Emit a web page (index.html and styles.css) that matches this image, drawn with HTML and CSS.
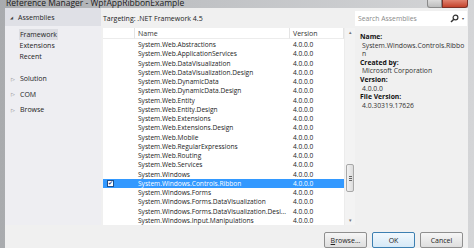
FILE: index.html
```html
<!DOCTYPE html>
<html lang="en">
<head>
    <meta charset="UTF-8">
    <title>Reference Manager - WpfAppRibbonExample</title>
    <link rel="stylesheet" href="styles.css">
</head>
<body>
<div class="window">
    <div class="titlebar">
        <span class="title">Reference Manager - WpfAppRibbonExample</span>
        <span class="btn-min"></span>
        <span class="btn-close"></span>
    </div>
    <div class="client">
        <div class="main">
            <!-- left navigation -->
            <div class="nav">
                <div class="nav-head"><span class="arrow-open">&#9698;</span>Assemblies</div>
                <div class="nav-sub selected">Framework</div>
                <div class="nav-sub">Extensions</div>
                <div class="nav-sub">Recent</div>
                <div class="nav-group"><span class="arrow-closed">&#9655;</span>Solution</div>
                <div class="nav-group"><span class="arrow-closed">&#9655;</span>COM</div>
                <div class="nav-group"><span class="arrow-closed">&#9655;</span>Browse</div>
            </div>

            <!-- assembly list -->
            <div class="center">
                <div class="targeting">Targeting: .NET Framework 4.5</div>
                <div class="listbox">
                    <div class="list">
                        <div class="row header">
                            <div class="c-check"></div>
                            <div class="c-name">Name</div>
                            <div class="c-ver">Version</div>
                        </div>
                        <div class="row"><div class="c-check"></div><div class="c-name">System.Web.Abstractions</div><div class="c-ver">4.0.0.0</div></div>
                        <div class="row"><div class="c-check"></div><div class="c-name">System.Web.ApplicationServices</div><div class="c-ver">4.0.0.0</div></div>
                        <div class="row"><div class="c-check"></div><div class="c-name">System.Web.DataVisualization</div><div class="c-ver">4.0.0.0</div></div>
                        <div class="row"><div class="c-check"></div><div class="c-name">System.Web.DataVisualization.Design</div><div class="c-ver">4.0.0.0</div></div>
                        <div class="row"><div class="c-check"></div><div class="c-name">System.Web.DynamicData</div><div class="c-ver">4.0.0.0</div></div>
                        <div class="row"><div class="c-check"></div><div class="c-name">System.Web.DynamicData.Design</div><div class="c-ver">4.0.0.0</div></div>
                        <div class="row"><div class="c-check"></div><div class="c-name">System.Web.Entity</div><div class="c-ver">4.0.0.0</div></div>
                        <div class="row"><div class="c-check"></div><div class="c-name">System.Web.Entity.Design</div><div class="c-ver">4.0.0.0</div></div>
                        <div class="row"><div class="c-check"></div><div class="c-name">System.Web.Extensions</div><div class="c-ver">4.0.0.0</div></div>
                        <div class="row"><div class="c-check"></div><div class="c-name">System.Web.Extensions.Design</div><div class="c-ver">4.0.0.0</div></div>
                        <div class="row"><div class="c-check"></div><div class="c-name">System.Web.Mobile</div><div class="c-ver">4.0.0.0</div></div>
                        <div class="row"><div class="c-check"></div><div class="c-name">System.Web.RegularExpressions</div><div class="c-ver">4.0.0.0</div></div>
                        <div class="row"><div class="c-check"></div><div class="c-name">System.Web.Routing</div><div class="c-ver">4.0.0.0</div></div>
                        <div class="row"><div class="c-check"></div><div class="c-name">System.Web.Services</div><div class="c-ver">4.0.0.0</div></div>
                        <div class="row"><div class="c-check"></div><div class="c-name">System.Windows</div><div class="c-ver">4.0.0.0</div></div>
                        <div class="row active">
                            <div class="c-check"><span class="checkbox">&#10004;</span></div>
                            <div class="c-name">System.Windows.Controls.Ribbon</div>
                            <div class="c-ver">4.0.0.0</div>
                        </div>
                        <div class="row"><div class="c-check"></div><div class="c-name">System.Windows.Forms</div><div class="c-ver">4.0.0.0</div></div>
                        <div class="row"><div class="c-check"></div><div class="c-name">System.Windows.Forms.DataVisualization</div><div class="c-ver">4.0.0.0</div></div>
                        <div class="row"><div class="c-check"></div><div class="c-name">System.Windows.Forms.DataVisualization.Desi...</div><div class="c-ver">4.0.0.0</div></div>
                        <div class="row"><div class="c-check"></div><div class="c-name">System.Windows.Input.Manipulations</div><div class="c-ver">4.0.0.0</div></div>
                    </div>
                    <div class="scrollbar">
                        <span class="sb-arrow">&#9652;</span>
                        <div class="sb-track"><div class="sb-thumb"><span></span><span></span><span></span></div></div>
                        <span class="sb-arrow">&#9662;</span>
                    </div>
                </div>
            </div>

            <!-- details -->
            <div class="details">
                <div class="search">
                    <span class="search-text">Search Assemblies</span>
                    <svg class="search-icon" width="9" height="9" viewBox="0 0 9 9">
                        <circle cx="5.5" cy="3.5" r="2.4" fill="none" stroke="#333" stroke-width="1.2"/>
                        <path d="M3.8 5.2 L1 8" stroke="#333" stroke-width="1.5"/>
                    </svg>
                    <span class="search-drop">&#9662;</span>
                </div>
                <div class="info">
                    <div class="label">Name:</div>
                    <div class="value">System.Windows.Controls.Ribbo<br>n</div>
                    <div class="label">Created by:</div>
                    <div class="value">Microsoft Corporation</div>
                    <div class="label">Version:</div>
                    <div class="value">4.0.0.0</div>
                    <div class="label">File Version:</div>
                    <div class="value">4.0.30319.17626</div>
                </div>
            </div>
        </div>
        <div class="footer">
            <button class="btn"><u>B</u>rowse...</button>
            <button class="btn default">OK</button>
            <button class="btn">Cancel</button>
        </div>
    </div>
</div>
</body>
</html>
```

FILE: styles.css
```css
* {
    box-sizing: border-box;
}

body {
    margin: 0;
    font-family: "Open Sans", "Noto Sans", sans-serif;
    font-size: 6.6px;
    color: #222;
}

.window {
    width: 474px;
    height: 248px;
    display: flex;
    flex-direction: column;
    background: linear-gradient(90deg, #a9abae 0%, #bfc1c4 40%, #d4d5d7 100%);
    overflow: hidden;
}

.titlebar {
    height: 10px;
    display: flex;
    align-items: flex-start;
    overflow: hidden;
}

.title {
    margin: -3px 0 0 6px;
    font-size: 8.5px;
    color: #1b1b1b;
    line-height: 11px;
}

.btn-min {
    margin-left: auto;
    width: 15px;
    height: 8px;
    background: linear-gradient(#dcdcdc, #bdbdbd);
    border: 1px solid #8a8a8a;
    border-top: none;
    border-radius: 0 0 0 3px;
}

.btn-close {
    width: 26px;
    height: 8px;
    margin-right: 6px;
    background: linear-gradient(#e0826f, #c4432c);
    border: 1px solid #7e3127;
    border-top: none;
    border-radius: 0 0 3px 0;
}

.client {
    flex: 1;
    margin: 0 6px 0 5px;
    background: #f0f0f0;
    display: flex;
    flex-direction: column;
}

.main {
    height: 217px;
    display: flex;
}

/* left nav */
.nav {
    width: 96px;
    background: #eeeef2;
    font-size: 7px;
}

.nav-head {
    height: 18px;
    background: #dfe0e6;
    display: flex;
    align-items: center;
    padding-left: 5px;
    color: #1e1e1e;
}

.arrow-open {
    font-size: 4px;
    width: 8px;
    color: #444;
}

.arrow-closed {
    font-size: 4.5px;
    width: 9px;
    color: #777;
}

.nav-sub {
    height: 11px;
    line-height: 11px;
    margin-left: 14px;
    padding-left: 0.5px;
    width: max-content;
}

.nav-head + .nav-sub {
    margin-top: 3px;
}

.nav-sub.selected {
    background: #dcdde2;
    padding: 0 1px;
}

.nav-group {
    height: 15.5px;
    display: flex;
    align-items: center;
    padding-left: 6px;
}

.nav-sub + .nav-group {
    margin-top: 9px;
}

/* center list */
.center {
    width: 254px;
    display: flex;
    flex-direction: column;
    padding-left: 2px;
}

.targeting {
    height: 21px;
    padding-top: 6px;
    font-size: 7px;
}

.listbox {
    flex: 1;
    display: flex;
    background: #fff;
}

.list {
    flex: 1;
}

.row {
    display: flex;
    height: 9.25px;
    line-height: 9.25px;
    white-space: nowrap;
}

.row.header {
    height: 11px;
    line-height: 11px;
    font-size: 7px;
    color: #333;
    margin-bottom: 1.5px;
}

.row.header > div {
    border-right: 1px solid #e4e4e4;
    border-bottom: 1px solid #ececec;
}

.c-check {
    width: 32px;
    display: flex;
    align-items: center;
    padding-left: 4px;
}

.c-name {
    width: 155px;
    padding-left: 3px;
    overflow: hidden;
}

.c-ver {
    width: 54px;
    padding-left: 3px;
}

.row.active {
    background: #3399ff;
    color: #fff;
}

.checkbox {
    width: 7px;
    height: 7px;
    background: #fff;
    border: 1px solid #1d4f8c;
    color: #1e3f8a;
    font-size: 5.5px;
    line-height: 5px;
    text-align: center;
}

.scrollbar {
    width: 11px;
    display: flex;
    flex-direction: column;
    align-items: center;
    background: #f3f3f3;
    border-left: 1px solid #ececec;
}

.sb-arrow {
    font-size: 5px;
    color: #777;
    height: 9px;
    line-height: 9px;
}

.sb-track {
    flex: 1;
    width: 100%;
    display: flex;
    flex-direction: column;
    justify-content: flex-end;
    padding-bottom: 24px;
}

.sb-thumb {
    height: 28px;
    margin: 0 1px;
    background: linear-gradient(90deg, #f2f2f2, #dcdcdc);
    border: 1px solid #a8a8a8;
    border-radius: 2px;
    display: flex;
    flex-direction: column;
    align-items: center;
    justify-content: center;
    gap: 1px;
}

.sb-thumb span {
    width: 3px;
    height: 1px;
    background: #666;
}

/* details */
.details {
    width: 113px;
    display: flex;
    flex-direction: column;
    padding-right: 1px;
}

.search {
    margin-top: 3px;
    height: 15px;
    background: #fff;
    display: flex;
    align-items: center;
    padding: 0 3px 0 3px;
}

.search-text {
    color: #8a8a8a;
    font-size: 6.8px;
}

.search-icon {
    margin-left: auto;
}

.search-drop {
    font-size: 4px;
    color: #444;
    margin-left: 3px;
}

.info {
    padding: 7px 0 0 5px;
    line-height: 8.6px;
    font-size: 6.8px;
}

.label {
    font-weight: bold;
    color: #111;
}

.value {
    padding-left: 2px;
    color: #333;
}

/* footer buttons */
.footer {
    flex: 1;
    display: flex;
    justify-content: flex-end;
    align-items: flex-start;
    gap: 5px;
    padding: 7px 5px 0 0;
}

.btn {
    width: 43px;
    height: 16px;
    padding: 0;
    font-family: inherit;
    font-size: 7px;
    color: #222;
    background: linear-gradient(#f6f6f6, #dedede);
    border: 1px solid #8f8f8f;
    border-radius: 2px;
}

.btn.default {
    border-color: #3c7fb1;
    background: linear-gradient(#f1f8fd, #d6e9f7);
}
```
